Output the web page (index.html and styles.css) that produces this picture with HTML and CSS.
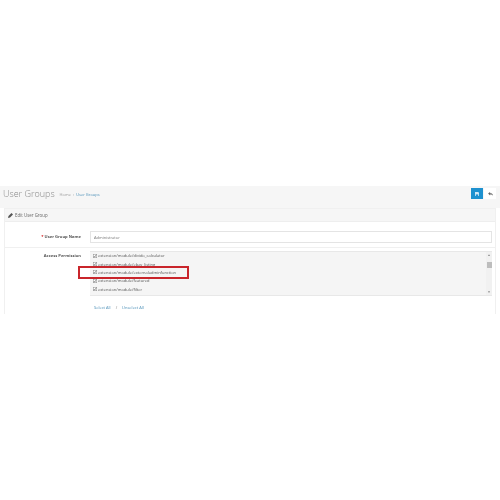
FILE: index.html
```html
<!DOCTYPE html>
<html>
<head>
  <title>User Groups</title>
  <link rel="stylesheet" href="styles.css">
</head>
<body>
  <svg class="defs" width="0" height="0">
    <symbol id="checked" viewBox="0 0 10 10">
      <rect x="0.5" y="0.5" width="9" height="9" fill="#FFF" stroke="#777"/>
      <path d="M2 5l2 3 4-6" fill="none" stroke="#555" stroke-width="1.4"/>
    </symbol>
  </svg>

  <div class="page">
    <div class="page-header">
      <h1>User Groups</h1>
      <ul class="breadcrumb">
        <li>Home</li>
        <li class="sep">›</li>
        <li class="current">User Groups</li>
      </ul>
      <div class="actions">
        <button class="btn btn-primary">
          <svg width="4" height="4" viewBox="0 0 10 10"><path d="M0 0h8l2 2v8H0z" fill="#cfe6f5"/><path d="M2 6h6v4H2z" fill="#1e91cf"/></svg>
        </button>
        <button class="btn btn-default">
          <svg width="5" height="4" viewBox="0 0 12 10"><path d="M5 0v3c4 0 7 1 7 7-1-3-3-4-7-4v3L0 4z" fill="#666"/></svg>
        </button>
      </div>
    </div>

    <div class="panel">
      <div class="panel-heading">
        <svg width="5" height="5" viewBox="0 0 10 10"><path d="M7 0l3 3-6 6-4 1 1-4z" fill="#555"/></svg>
        Edit User Group
      </div>

      <div class="form-group name-row">
        <label><span>*</span> User Group Name</label>
        <div class="field">
          <input type="text" value="Administrator">
        </div>
      </div>

      <div class="form-group perm-row">
        <label>Access Permission</label>
        <div class="field">
          <div class="well">
            <div class="list">
              <div class="item"><svg class="check"><use href="#checked"/></svg>extension/module/divido_calculator</div>
              <div class="item"><svg class="check"><use href="#checked"/></svg>extension/module/ebay_listing</div>
              <div class="item"><svg class="check"><use href="#checked"/></svg>extension/module/externaladminfunction</div>
              <div class="item"><svg class="check"><use href="#checked"/></svg>extension/module/featured</div>
              <div class="item"><svg class="check"><use href="#checked"/></svg>extension/module/filter</div>
              <div class="item"><svg class="check"><use href="#checked"/></svg></div>
            </div>
            <div class="scrollbar">
              <span class="arrow">▲</span>
              <span class="thumb"></span>
              <span class="arrow">▼</span>
            </div>
            <div class="highlight"></div>
          </div>
          <div class="select-links">
            <a>Select All</a><span>/</span><a>Unselect All</a>
          </div>
        </div>
      </div>
    </div>
  </div>
</body>
</html>
```

FILE: styles.css
```css
body {
  margin: 0;
  background-color: #FFF;
  font-family: "Open Sans", sans-serif;
  color: #666;
}

.defs {
  position: absolute;
}

.page {
  margin-top: 186px;
  height: 128px;
  background-color: #FFF;
  overflow: hidden;
  filter: blur(0.3px);
}

.page-header {
  display: flex;
  align-items: center;
  height: 15px;
  padding: 0 4px 7px 3px;
  background-color: #F6F6F6;
}

.page-header h1 {
  margin: 0;
  font-size: 9px;
  font-weight: 300;
  color: #888;
}

.breadcrumb {
  display: flex;
  gap: 2px;
  margin: 2px 0 0 5px;
  padding: 0;
  list-style: none;
  font-size: 4px;
  color: #999;
}

.breadcrumb .current {
  color: #4D90B8;
}

.actions {
  display: flex;
  gap: 1px;
  margin-left: auto;
}

.btn {
  display: flex;
  align-items: center;
  justify-content: center;
  width: 12px;
  height: 11px;
  padding: 0;
  border: none;
}

.btn-primary {
  background-color: #1E91CF;
}

.btn-default {
  background-color: #FFF;
}

.panel {
  margin: 0 4px;
  height: 106px;
  border: 1px solid #F0F0F0;
  border-bottom: none;
  background-color: #FFF;
}

.panel-heading {
  display: flex;
  align-items: center;
  gap: 2px;
  height: 12px;
  padding-left: 3px;
  background-color: #F6F6F6;
  border-bottom: 1px solid #EEE;
  font-size: 4.4px;
  color: #666;
}

.form-group {
  display: flex;
  border-bottom: 1px solid #F0F0F0;
}

.form-group label {
  width: 76px;
  margin-right: 9px;
  flex-shrink: 0;
  text-align: right;
  font-size: 4.1px;
  font-weight: bold;
  color: #555;
}

.form-group label span {
  color: #C00;
}

.field {
  flex: 1;
  margin-right: 3px;
}

.name-row {
  height: 26px;
  padding-top: 9px;
  box-sizing: border-box;
}

.name-row label {
  line-height: 12px;
}

.name-row input {
  display: block;
  width: 100%;
  height: 12px;
  box-sizing: border-box;
  padding: 0 3px;
  border: 1px solid #E4E4E4;
  font-family: inherit;
  font-size: 4px;
  color: #777;
}

.perm-row {
  padding-top: 3px;
  border-bottom: none;
}

.perm-row label {
  line-height: 10px;
}

.well {
  position: relative;
  display: flex;
  height: 45px;
  background-color: #F5F5F5;
  border-top: 1px solid #E8E8E8;
  border-bottom: 1px solid #E8E8E8;
  box-sizing: border-box;
}

.list {
  flex: 1;
  overflow: hidden;
  padding-left: 3px;
}

.item {
  display: flex;
  align-items: center;
  height: 8.35px;
  font-size: 4px;
  color: #555;
}

.item:first-child {
  margin-top: -0.5px;
}

.check {
  width: 4px;
  height: 4px;
  margin-right: 1px;
  flex-shrink: 0;
}

.scrollbar {
  display: flex;
  flex-direction: column;
  align-items: center;
  justify-content: space-between;
  width: 6px;
  background-color: #F1F1F1;
}

.arrow {
  font-size: 3px;
  line-height: 6px;
  color: #777;
}

.thumb {
  width: 5px;
  height: 6px;
  margin-bottom: 18px;
  background-color: #BDBDBD;
}

.highlight {
  position: absolute;
  left: -12px;
  top: 14px;
  width: 107px;
  height: 9px;
  border: 2px solid #C9252B;
}

.select-links {
  display: flex;
  gap: 5px;
  padding-top: 9px;
  padding-left: 4px;
  font-size: 4px;
  color: #4D90B8;
}

.select-links span {
  color: #777;
}
```
